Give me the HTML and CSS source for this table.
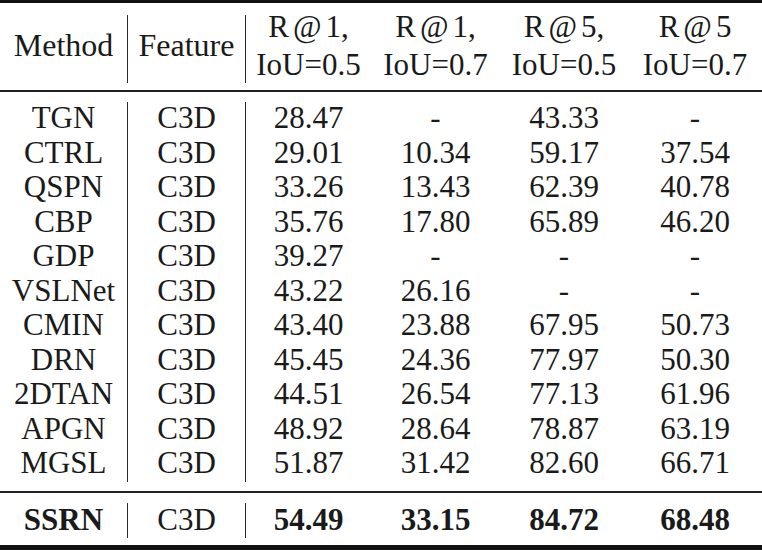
FILE: index.html
```html
<!DOCTYPE html>
<html lang="en">
<head>
    <meta charset="UTF-8">
    <meta name="viewport" content="width=device-width, initial-scale=1.0">
    <title>Temporal Grounding Results</title>
    <link rel="stylesheet" href="styles.css">
</head>
<body>
    <div class="results">
        <div class="rule top"></div>
        <div class="line head">
            <div class="single"><span>Method</span></div>
            <div class="single sep"><span>Feature</span></div>
            <div class="sep"><span>R<i class="at">@</i>1,<br>IoU=0.5</span></div>
            <div><span>R<i class="at">@</i>1,<br>IoU=0.7</span></div>
            <div><span>R<i class="at">@</i>5,<br>IoU=0.5</span></div>
            <div><span>R<i class="at">@</i>5<br>IoU=0.7</span></div>
        </div>
        <div class="rule mid"></div>

        <div class="block">
            <div class="line"><div>TGN</div><div class="sep">C3D</div><div class="sep">28.47</div><div>-</div><div>43.33</div><div>-</div></div>
            <div class="line"><div>CTRL</div><div class="sep">C3D</div><div class="sep">29.01</div><div>10.34</div><div>59.17</div><div>37.54</div></div>
            <div class="line"><div>QSPN</div><div class="sep">C3D</div><div class="sep">33.26</div><div>13.43</div><div>62.39</div><div>40.78</div></div>
            <div class="line"><div>CBP</div><div class="sep">C3D</div><div class="sep">35.76</div><div>17.80</div><div>65.89</div><div>46.20</div></div>
            <div class="line"><div>GDP</div><div class="sep">C3D</div><div class="sep">39.27</div><div>-</div><div>-</div><div>-</div></div>
            <div class="line"><div>VSLNet</div><div class="sep">C3D</div><div class="sep">43.22</div><div>26.16</div><div>-</div><div>-</div></div>
            <div class="line"><div>CMIN</div><div class="sep">C3D</div><div class="sep">43.40</div><div>23.88</div><div>67.95</div><div>50.73</div></div>
            <div class="line"><div>DRN</div><div class="sep">C3D</div><div class="sep">45.45</div><div>24.36</div><div>77.97</div><div>50.30</div></div>
            <div class="line"><div>2DTAN</div><div class="sep">C3D</div><div class="sep">44.51</div><div>26.54</div><div>77.13</div><div>61.96</div></div>
            <div class="line"><div>APGN</div><div class="sep">C3D</div><div class="sep">48.92</div><div>28.64</div><div>78.87</div><div>63.19</div></div>
            <div class="line"><div>MGSL</div><div class="sep">C3D</div><div class="sep">51.87</div><div>31.42</div><div>82.60</div><div>66.71</div></div>
        </div>

        <div class="rule mid"></div>
        <div class="block last">
            <div class="line ours"><div class="best">SSRN</div><div class="sep">C3D</div><div class="sep best">54.49</div><div class="best">33.15</div><div class="best">84.72</div><div class="best">68.48</div></div>
        </div>
        <div class="rule bottom"></div>
    </div>
</body>
</html>
```

FILE: styles.css
```css
body {
    margin: 0;
    padding: 0;
    background-color: #ffffff;
    color: #1a1a1a;
    font-family: "Liberation Serif", serif;
    font-size: 31px;
}
.results {
    width: 762px;
    display: flex;
    flex-direction: column;
}
.line {
    display: grid;
    grid-template-columns: 127px 118px 126px 129px 128px 134px;
    grid-template-rows: minmax(0, 1fr);
    text-align: center;
    height: 34.5px;
    line-height: 31px;
}
.sep {
    border-left: 1px solid #2a2a2a;
}

/* booktabs style rules */
.rule {
    background-color: #222222;
    height: 2px;
}
.rule.top {
    height: 3px;
    background-color: #111111;
    margin-bottom: 12px;
}
.rule.mid {
    margin-top: 7px;
}
.rule.bottom {
    height: 5px;
    background-color: #111111;
    margin-top: 7.5px;
}

/* header cells: two-line labels sit a bit above the column rules */
.head {
    height: 68px;
    line-height: 38px;
}
.head span {
    display: block;
    margin-top: -7px;
}
.head .single span {
    margin-top: 11px;
    font-size: 32px;
}
.at {
    font-style: normal;
    margin: 0 4px;
}
.block {
    padding-top: 10px;
    padding-bottom: 2px;
}
.block.last {
    padding-bottom: 0;
}
.ours {
    height: 35px;
    line-height: 33px;
}
.best {
    font-weight: bold;
}
```
